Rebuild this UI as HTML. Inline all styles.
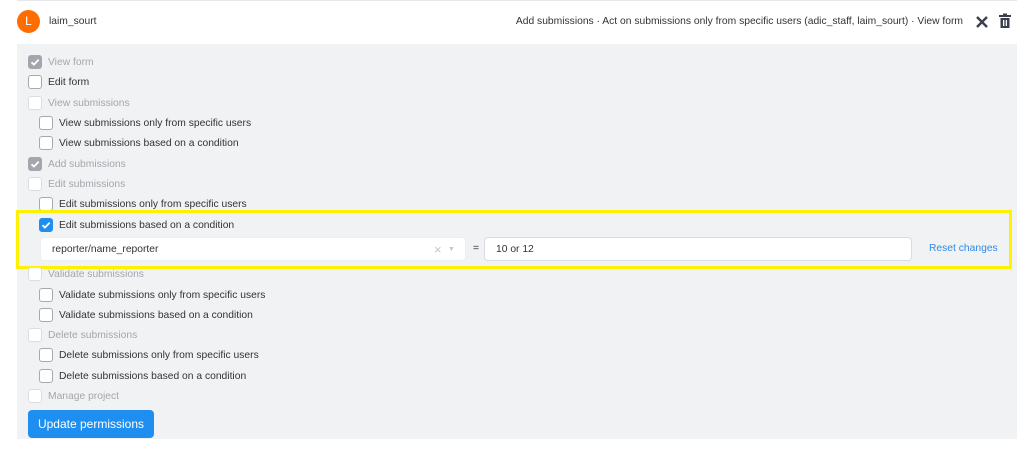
<!DOCTYPE html>
<html><head><style>
*{box-sizing:border-box;margin:0;padding:0}
body{width:1024px;height:469px;background:#fff;font-family:"Liberation Sans",sans-serif;font-size:10.3px;color:#333;position:relative;overflow:hidden}
.top{position:absolute;left:17px;top:0;width:1000px;height:1px;background:#e8e8ea}
.av{position:absolute;left:17px;top:10px;width:23px;height:23px;border-radius:50%;background:#ff6d00;color:#fff;font-size:12px;text-align:center;line-height:23px}
.name{position:absolute;left:49px;top:16px}
.desc{position:absolute;right:61px;top:16px}
.panel{position:absolute;left:17px;top:44px;width:1000px;height:395px;background:#f1f2f4}
.row{position:absolute;height:16px;line-height:14px;display:flex;align-items:center}
.row span{padding-top:2px}
.cb{width:14px;height:14px;border:1px solid #a7a9b1;border-radius:3px;background:#fff;margin-right:6px;flex:none}
.dis .cb{border-color:#dcdde1}
.dis{color:#a4a6ad}
.chk .cb{background:#a4a6ad;border-color:#a4a6ad}
.blue .cb{background:#1e8ff0;border-color:#1e8ff0}
.cb svg{display:block}
.yb{position:absolute;left:16px;top:210px;width:996px;height:59px;border:3px solid #fff200}
.sel{position:absolute;left:40px;top:237px;width:426px;height:24px;background:#fff;border-radius:4px;border:1px solid #eceef0;padding-left:11px;line-height:23px}
.inp{position:absolute;left:484px;top:237px;width:428px;height:24px;background:#fff;border:1px solid #d9dbe0;border-radius:4px;padding-left:11px;line-height:23px}
.btn{position:absolute;left:28px;top:410px;width:126px;height:28px;background:#1e8ff0;color:#fff;border-radius:4px;font-size:12px;text-align:center;line-height:28px}
</style></head><body>
<div class="top"></div>
<div class="av">L</div>
<div class="name">laim_sourt</div>
<div class="desc">Add submissions · Act on submissions only from specific users (adic_staff, laim_sourt) · View form</div>
<svg style="position:absolute;left:975px;top:15px" width="14" height="14" viewBox="0 0 14 14"><path d="M2 2L12 12M12 2L2 12" stroke="#3a3f4b" stroke-width="2.4"/></svg>
<svg style="position:absolute;left:998px;top:13px" width="14" height="16" viewBox="0 0 14 16"><rect x="1" y="2" width="12" height="2" fill="#3a3f4b"/><rect x="5" y="0.5" width="4" height="2" fill="#3a3f4b"/><path d="M2.5 5h9v10h-9z" fill="#3a3f4b"/><rect x="5" y="7" width="1.3" height="6" fill="#fff"/><rect x="7.7" y="7" width="1.3" height="6" fill="#fff"/></svg>
<div class="panel"></div>

<div class="row dis chk" style="left:28px;top:54px"><div class="cb"><svg width="12" height="12" viewBox="0 0 12 12"><path d="M2.5 6.2l2.4 2.4 4.8-5" stroke="#fff" stroke-width="1.8" fill="none"/></svg></div><span>View form</span></div>
<div class="row" style="left:28px;top:74px"><div class="cb"></div><span>Edit form</span></div>
<div class="row dis" style="left:28px;top:95px"><div class="cb"></div><span>View submissions</span></div>
<div class="row" style="left:39px;top:115px"><div class="cb"></div><span>View submissions only from specific users</span></div>
<div class="row" style="left:39px;top:135px"><div class="cb"></div><span>View submissions based on a condition</span></div>
<div class="row dis chk" style="left:28px;top:156px"><div class="cb"><svg width="12" height="12" viewBox="0 0 12 12"><path d="M2.5 6.2l2.4 2.4 4.8-5" stroke="#fff" stroke-width="1.8" fill="none"/></svg></div><span>Add submissions</span></div>
<div class="row dis" style="left:28px;top:176px"><div class="cb"></div><span>Edit submissions</span></div>
<div class="row" style="left:39px;top:196px"><div class="cb"></div><span>Edit submissions only from specific users</span></div>
<div class="row blue" style="left:39px;top:217px"><div class="cb"><svg width="12" height="12" viewBox="0 0 12 12"><path d="M2.5 6.2l2.4 2.4 4.8-5" stroke="#fff" stroke-width="1.8" fill="none"/></svg></div><span>Edit submissions based on a condition</span></div>
<div class="sel">reporter/name_reporter<span style="position:absolute;left:393px;top:0;color:#c4c6cc;font-size:13px">×</span><span style="position:absolute;left:407px;top:0;color:#c4c6cc;font-size:7px">▼</span></div>
<div style="position:absolute;left:473px;top:243px">=</div>
<div class="inp">10 or 12</div>
<div style="position:absolute;left:929px;top:243px;color:#2f8ae8">Reset changes</div>
<div class="yb"></div>
<div class="row dis" style="left:28px;top:266px"><div class="cb"></div><span>Validate submissions</span></div>
<div class="row" style="left:39px;top:287px"><div class="cb"></div><span>Validate submissions only from specific users</span></div>
<div class="row" style="left:39px;top:307px"><div class="cb"></div><span>Validate submissions based on a condition</span></div>
<div class="row dis" style="left:28px;top:327px"><div class="cb"></div><span>Delete submissions</span></div>
<div class="row" style="left:39px;top:347px"><div class="cb"></div><span>Delete submissions only from specific users</span></div>
<div class="row" style="left:39px;top:368px"><div class="cb"></div><span>Delete submissions based on a condition</span></div>
<div class="row dis" style="left:28px;top:388px"><div class="cb"></div><span>Manage project</span></div>
<div class="btn">Update permissions</div>
</body></html>
